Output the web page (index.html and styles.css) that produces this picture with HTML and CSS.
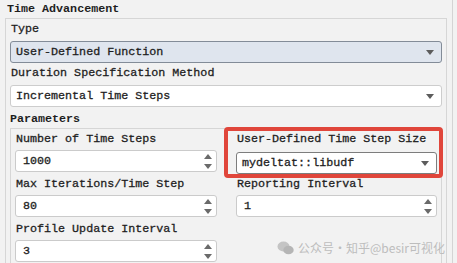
FILE: index.html
```html
<!DOCTYPE html>
<html lang="en">
<head>
    <meta charset="UTF-8">
    <title>Time Advancement</title>
    <link rel="stylesheet" href="styles.css">
</head>
<body>
    <div class="page">
        <div class="title">Time Advancement</div>
        <div class="group">
            <div class="label">Type</div>
            <div class="combo combo-active">
                <span>User-Defined Function</span>
                <span class="caret"></span>
            </div>
            <div class="label">Duration Specification Method</div>
            <div class="combo">
                <span>Incremental Time Steps</span>
                <span class="caret"></span>
            </div>
            <div class="title sub">Parameters</div>
            <div class="subgroup">
                <div class="fields">
                    <div class="field">
                        <div class="label">Number of Time Steps</div>
                        <div class="spin"><span>1000</span><span class="arrows"><i class="up"></i><i class="down"></i></span></div>
                    </div>
                    <div class="field marked">
                        <div class="label">User-Defined Time Step Size</div>
                        <div class="combo combo-dark">
                            <span>mydeltat::libudf</span>
                            <span class="caret"></span>
                        </div>
                    </div>
                    <div class="field">
                        <div class="label">Max Iterations/Time Step</div>
                        <div class="spin"><span>80</span><span class="arrows"><i class="up"></i><i class="down"></i></span></div>
                    </div>
                    <div class="field">
                        <div class="label">Reporting Interval</div>
                        <div class="spin"><span>1</span><span class="arrows"><i class="up"></i><i class="down"></i></span></div>
                    </div>
                    <div class="field">
                        <div class="label">Profile Update Interval</div>
                        <div class="spin"><span>3</span><span class="arrows"><i class="up"></i><i class="down"></i></span></div>
                    </div>
                    <div class="field watermark">
                        <svg class="wm-icon" width="17" height="14" viewBox="0 0 17 14">
                            <ellipse cx="6.5" cy="5.5" rx="6" ry="5" fill="#c4c4c4"/>
                            <ellipse cx="11.5" cy="9" rx="5.2" ry="4.3" fill="#b5b5b5"/>
                        </svg>
                        <span>公众号·知乎@besir可视化</span>
                    </div>
                </div>
            </div>
        </div>
    </div>
</body>
</html>
```

FILE: styles.css
```css
* {
    margin: 0;
    padding: 0;
    box-sizing: border-box;
}

body {
    background-color: #f2f2f2;
    color: #1e1e1e;
    font-family: "Liberation Mono", "Courier New", monospace;
    font-size: 11.7px;
    overflow: hidden;
}

.page {
    width: 453px;
    height: 263px;
    border-right: 1px solid #d4d4d4;
    padding-left: 5px;
}

.title {
    font-weight: bold;
    height: 18px;
    line-height: 18px;
    padding-left: 2px;
}

.title.sub {
    height: 18px;
    line-height: 18px;
    margin-top: 3px;
    padding-left: 0;
}

.group {
    width: 442px;
    height: 245px;
    border-top: 1px solid #d6d6d6;
    border-left: 1px solid #d6d6d6;
    border-right: 1px solid #d6d6d6;
    padding: 0 4px 0 4px;
}

.label {
    height: 22px;
    line-height: 21px;
    padding-left: 1px;
    -webkit-text-stroke: 0.3px #1e1e1e;
}

.combo {
    height: 22px;
    display: flex;
    align-items: center;
    justify-content: space-between;
    padding: 0 7px 0 5px;
    background-color: #fff;
    border: 1px solid #cdcdcd;
    border-radius: 3px;
    -webkit-text-stroke: 0.3px #1e1e1e;
}

.combo-active {
    background-color: #dfe5ee;
    border-color: #838c98;
}

.combo-dark {
    border-color: #7d7d7d;
}

.caret {
    width: 0;
    height: 0;
    border-left: 4px solid transparent;
    border-right: 4px solid transparent;
    border-top: 5px solid #5c5c5c;
}

.subgroup {
    border-top: 1px solid #d6d6d6;
    border-left: 1px solid #d6d6d6;
    border-right: 1px solid #d6d6d6;
    padding: 0 4px 0 4px;
    height: 141px;
}

.fields {
    display: grid;
    grid-template-columns: 202px 201px;
    column-gap: 19px;
}

.field {
    height: 45px;
    position: relative;
}

.field .label {
    height: 21px;
    line-height: 21px;
}

.marked .label {
    height: 23px;
}

.marked::after {
    content: "";
    position: absolute;
    top: -2px;
    left: -12px;
    right: -6px;
    bottom: -4px;
    border: 4px solid #e0463b;
    border-radius: 4px;
}

.spin {
    height: 22px;
    display: flex;
    align-items: center;
    justify-content: space-between;
    padding: 0 4px 0 7px;
    background-color: #fff;
    border: 1px solid #cbcbcb;
    border-radius: 3px;
    -webkit-text-stroke: 0.3px #1e1e1e;
}

.arrows {
    display: flex;
    flex-direction: column;
    gap: 5px;
}

.arrows i {
    display: block;
    width: 0;
    height: 0;
    border-left: 4px solid transparent;
    border-right: 4px solid transparent;
}

.arrows .up {
    border-bottom: 5px solid #6a6a6a;
}

.arrows .down {
    border-top: 5px solid #6a6a6a;
}

.watermark {
    display: flex;
    align-items: center;
    gap: 4px;
    padding: 12px 0 0 41px;
    color: #bdbdbd;
    font-family: "Noto Sans CJK SC", sans-serif;
    font-size: 12px;
    white-space: nowrap;
}

.wm-icon {
    flex-shrink: 0;
}
```
